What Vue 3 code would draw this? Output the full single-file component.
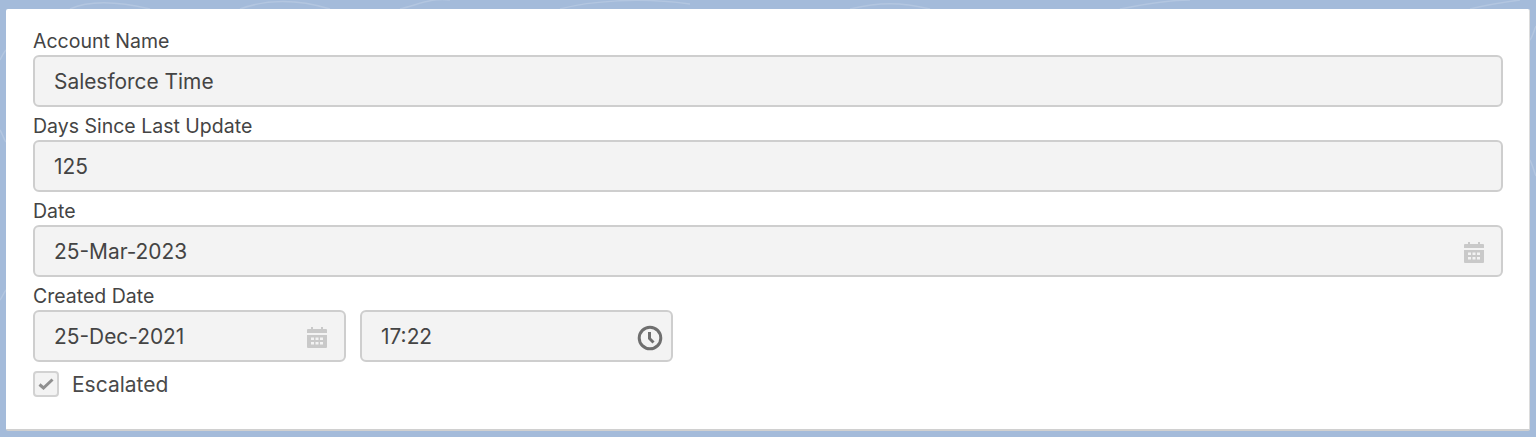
<script setup>
const fields = [
  { label: 'Account Name', value: 'Salesforce Time' },
  { label: 'Days Since Last Update', value: '125' },
  { label: 'Date', value: '25-Mar-2023', calendar: true },
]
</script>

<template>
  <div class="page">
    <svg class="waves" viewBox="0 0 1536 437" preserveAspectRatio="none" aria-hidden="true">
      <path d="M70 9C90 0 120 2 150 9M240 9C270 -2 300 0 330 9M400 9C420 4 430 -2 450 0M560 9C590 1 640 -3 690 4M850 9C880 2 900 2 930 9M1120 9C1150 3 1170 0 1190 0M1470 9C1490 4 1505 2 1520 0M1530 40C1533 36 1534 30 1536 26M1530 160C1533 166 1534 172 1536 176M0 60C2 56 4 52 6 50M0 130C3 135 4 140 6 142M0 300C3 296 4 292 6 290" />
    </svg>
    <div class="card">
      <div v-for="f in fields" :key="f.label" class="field">
        <div class="label">{{ f.label }}</div>
        <div class="input">
          <span>{{ f.value }}</span>
          <svg v-if="f.calendar" class="cal" viewBox="0 0 20 21">
            <path d="M4 0h2v2h8V0h2v2h3a1 1 0 0 1 1 1v3H0V3a1 1 0 0 1 1-1h3z" />
            <path fill-rule="evenodd" d="M0 8h20v12a1 1 0 0 1-1 1H1a1 1 0 0 1-1-1zM4 10.500v2.500h3v-2.500zm4.500 0v2.500h3v-2.500zm4.500 0v2.500h3v-2.500zM4 15v2.500h3V15zm4.500 0v2.500h3V15zm4.500 0v2.500h3V15z" />
          </svg>
        </div>
      </div>
      <div class="field">
        <div class="label">Created Date</div>
        <div class="pair">
          <div class="input">
            <span>25-Dec-2021</span>
            <svg class="cal" viewBox="0 0 20 21">
              <path d="M4 0h2v2h8V0h2v2h3a1 1 0 0 1 1 1v3H0V3a1 1 0 0 1 1-1h3z" />
              <path fill-rule="evenodd" d="M0 8h20v12a1 1 0 0 1-1 1H1a1 1 0 0 1-1-1zM4 10.500v2.500h3v-2.500zm4.500 0v2.500h3v-2.500zm4.500 0v2.500h3v-2.500zM4 15v2.500h3V15zm4.500 0v2.500h3V15zm4.500 0v2.500h3V15z" />
            </svg>
          </div>
          <div class="input">
            <span>17:22</span>
            <svg class="clock" viewBox="0 0 26 26">
              <circle cx="13" cy="13" r="10.800" />
              <path d="M12.500 7v6.500l4 4" />
            </svg>
          </div>
        </div>
      </div>
      <div class="check-row">
        <span class="box">
          <svg viewBox="0 0 16 12"><path d="M1.500 6.500l4 3.500 9-8.500" /></svg>
        </span>
        <span class="check-label">Escalated</span>
      </div>
    </div>
  </div>
</template>

<style>
body { margin: 0; }
</style>

<style scoped>
.page {
  position: relative;
  box-sizing: border-box;
  width: 1536px;
  height: 437px;
  padding: 9px 6px 6px;
  background: #a4bbda;
  overflow: hidden;
  font-family: Inter, "Liberation Sans", sans-serif;
}
.waves {
  position: absolute;
  inset: 0;
  width: 100%;
  height: 100%;
}
.waves path {
  fill: none;
  stroke: #b3c6e0;
  stroke-width: 1.500;
}
.card {
  position: relative;
  box-sizing: border-box;
  height: 422px;
  padding: 17px 26px 0 27px;
  background: #fff;
  border-right: 1px solid #dcdcdc;
  border-bottom: 2px solid #d0d0d0;
  border-radius: 2px;
}
.field {
  margin-bottom: 4px;
}
.label {
  height: 29px;
  line-height: 30px;
  font-size: 19.500px;
  color: #444;
  white-space: nowrap;
}
.input {
  box-sizing: border-box;
  display: flex;
  align-items: center;
  justify-content: space-between;
  height: 52px;
  padding: 0 17px 0 19px;
  background: #f3f3f3;
  border: 2px solid #cecece;
  border-radius: 6px;
  font-size: 20.900px;
  color: #444;
}
.pair {
  display: flex;
  gap: 14px;
}
.pair .input {
  width: 313px;
}
.cal {
  width: 20px;
  height: 21px;
  margin-top: 3px;
  fill: #c9c9c9;
}
.clock {
  width: 26px;
  height: 26px;
  margin-top: 3px;
  margin-right: -9px;
  fill: none;
  stroke: #6f6f6f;
  stroke-width: 3;
}
.check-row {
  display: flex;
  align-items: center;
  gap: 13px;
  margin-top: 9px;
}
.box {
  box-sizing: border-box;
  display: flex;
  align-items: center;
  justify-content: center;
  width: 26px;
  height: 26px;
  background: #f3f3f3;
  border: 2px solid #d2d2d2;
  border-radius: 4px;
}
.box svg {
  width: 16px;
  height: 12px;
  fill: none;
  stroke: #8f8f8f;
  stroke-width: 3;
}
.check-label {
  font-size: 21px;
  color: #4a4a4a;
}
</style>
